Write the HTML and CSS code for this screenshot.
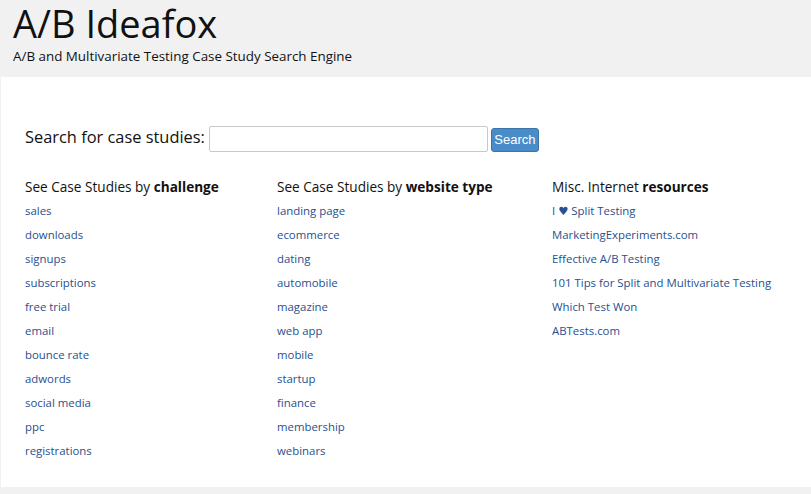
FILE: index.html
```html
<!DOCTYPE html>
<html>
<head>
<meta charset="utf-8">
<link rel="stylesheet" href="styles.css">
</head>
<body>
<header class="masthead">
  <h1 class="title">A/B Ideafox</h1>
  <p class="tagline">A/B and Multivariate Testing Case Study Search Engine</p>
</header>
<main class="panel">
  <form class="search">
    <label class="search-label" for="q">Search for case studies:</label>
    <input class="search-input" id="q" type="text">
    <button class="search-btn" type="button">Search</button>
  </form>
  <div class="columns">
    <section class="col col-1">
      <h2 class="col-title">See Case Studies by <b>challenge</b></h2>
      <ul class="links">
        <li><a href="#">sales</a></li>
        <li><a href="#">downloads</a></li>
        <li><a href="#">signups</a></li>
        <li><a href="#">subscriptions</a></li>
        <li><a href="#">free trial</a></li>
        <li><a href="#">email</a></li>
        <li><a href="#">bounce rate</a></li>
        <li><a href="#">adwords</a></li>
        <li><a href="#">social media</a></li>
        <li><a href="#">ppc</a></li>
        <li><a href="#">registrations</a></li>
      </ul>
    </section>
    <section class="col col-2">
      <h2 class="col-title">See Case Studies by <b>website type</b></h2>
      <ul class="links">
        <li><a href="#">landing page</a></li>
        <li><a href="#">ecommerce</a></li>
        <li><a href="#">dating</a></li>
        <li><a href="#">automobile</a></li>
        <li><a href="#">magazine</a></li>
        <li><a href="#">web app</a></li>
        <li><a href="#">mobile</a></li>
        <li><a href="#">startup</a></li>
        <li><a href="#">finance</a></li>
        <li><a href="#">membership</a></li>
        <li><a href="#">webinars</a></li>
      </ul>
    </section>
    <section class="col col-3">
      <h2 class="col-title">Misc. Internet <b>resources</b></h2>
      <ul class="links">
        <li><a href="#">I ♥ Split Testing</a></li>
        <li><a href="#">MarketingExperiments.com</a></li>
        <li><a href="#">Effective A/B Testing</a></li>
        <li><a href="#">101 Tips for Split and Multivariate Testing</a></li>
        <li><a href="#">Which Test Won</a></li>
        <li><a href="#">ABTests.com</a></li>
      </ul>
    </section>
  </div>
</main>
</body>
</html>
```

FILE: styles.css
```css
html, body {
  margin: 0;
  padding: 0;
}
body {
  background: #f1f1f1;
  font-family: "Open Sans", "DejaVu Sans", sans-serif;
  color: #111;
  height: 494px;
  overflow: hidden;
}
.masthead {
  display: flow-root;
  padding: 0 0 0 13px;
  height: 77px;
  box-sizing: border-box;
}
.title {
  margin: -3px 0 0 0;
  font-weight: 400;
  font-size: 38px;
  line-height: 52px;
  color: #111;
}
.tagline {
  margin: -3px 0 0 0;
  font-size: 13.4px;
  line-height: 20px;
  color: #111;
}
.panel {
  margin-left: 1px;
  background: #fff;
  height: 410px;
  box-sizing: border-box;
  padding: 49px 0 0 24px;
}
.search {
  display: flex;
  align-items: center;
  margin: 0;
}
.search-label {
  font-size: 16.4px;
  line-height: 22px;
  color: #111;
  margin-right: 4px;
  margin-top: -4px;
}
.search-input {
  width: 279px;
  height: 26px;
  box-sizing: border-box;
  border: 1px solid #c8c8c8;
  border-radius: 2px;
  margin: 0 3px 0 0;
  padding: 2px 4px;
  background: #fff;
}
.search-btn {
  height: 24px;
  width: 48px;
  padding: 0;
  margin-top: 1px;
  background: #4a8cc8;
  border: 1px solid #3a74a8;
  border-radius: 3px;
  color: #fff;
  font-family: "Liberation Sans", Arial, sans-serif;
  font-size: 13px;
  line-height: 22px;
}
.columns {
  display: flex;
  margin-top: 24px;
}
.col-1 { width: 252px; }
.col-2 { width: 275px; }
.col-3 { flex: 1; }
.col-title {
  margin: 0 0 1px 0;
  font-size: 13.6px;
  font-weight: 400;
  line-height: 22px;
  color: #111;
}
.col-title b {
  font-weight: 700;
}
.links {
  list-style: none;
  margin: 0;
  padding: 0;
}
.links li {
  font-size: 11.4px;
  line-height: 24px;
}
.links a {
  color: #27508f;
  text-decoration: none;
}
```
